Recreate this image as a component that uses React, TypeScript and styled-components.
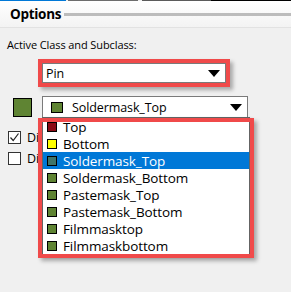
import React from "react";
import styled, { createGlobalStyle } from "styled-components";

type Layer = { name: string; color: string };

const LAYERS: Layer[] = [
	{ name: "Top", color: "#8b0a14" },
	{ name: "Bottom", color: "#ffff00" },
	{ name: "Soldermask_Top", color: "#5f8433" },
	{ name: "Soldermask_Bottom", color: "#5f8433" },
	{ name: "Pastemask_Top", color: "#5f8433" },
	{ name: "Pastemask_Bottom", color: "#5f8433" },
	{ name: "Filmmasktop", color: "#5f8433" },
	{ name: "Filmmaskbottom", color: "#5f8433" },
];

const TABS = [
	{ width: 66, color: "#0078d7" },
	{ width: 2, color: "#f0f0f0" },
	{ width: 70, color: "#6d6d6d" },
	{ width: 4, color: "#f0f0f0" },
	{ width: 69, color: "#5a5a5a" },
	{ width: 80, color: "#000000" },
];

const Arrow: React.FC = () => (
	<svg width="12" height="7" viewBox="0 0 12 7">
		<polygon points="0,0 12,0 6,7" fill="#000" />
	</svg>
);

const App: React.FC = () => {
	const selected = 2;

	return (
		<Page>
			<GlobalStyle />
			{/* tab strip at the very top */}
			<TabStrip>
				{TABS.map((t, i) => (
					<TabMark key={i} w={t.width} color={t.color} />
				))}
			</TabStrip>
			<Header>
				<Title>Options</Title>
				<Rule />
			</Header>
			<Body>
				<Label>Active Class and Subclass:</Label>
				<Highlight>
					<Combo>
						<ComboText>Pin</ComboText>
						<Arrow />
					</Combo>
				</Highlight>
				<SwatchRow>
					<BigSwatch />
					<Combo wide>
						<SmallSwatch color="#5f8433" />
						<ComboText indent>Soldermask_Top</ComboText>
						<Arrow />
					</Combo>
				</SwatchRow>
				<Checks>
					<CheckRow>
						<CheckBox>
							<svg width="11" height="11" viewBox="0 0 11 11">
								<polyline
									points="1.5,5.5 4.2,8.5 9.5,1.5"
									fill="none"
									stroke="#222"
									strokeWidth="1.2"
								/>
							</svg>
						</CheckBox>
						<CheckText>Display</CheckText>
					</CheckRow>
					<CheckRow>
						<CheckBox />
						<CheckText>Display</CheckText>
					</CheckRow>
				</Checks>
			</Body>
			{/* open dropdown list */}
			<Popup>
				{LAYERS.map((l, i) => (
					<Item key={l.name} active={i === selected}>
						<ItemSwatch color={i === selected ? "#3e7468" : l.color} />
						<span>{l.name}</span>
					</Item>
				))}
			</Popup>
			<PopupMark />
		</Page>
	);
};

const GlobalStyle = createGlobalStyle`
	html, body {
		margin: 0;
		padding: 0;
		background: #f0f0f0;
	}
	body {
		font-family: "Segoe UI", "Open Sans", "Noto Sans", sans-serif;
		color: #000;
	}
`;

const Page = styled.div`
	position: relative;
	width: 291px;
	height: 292px;
	overflow: hidden;
	background: #f0f0f0;
`;

const TabStrip = styled.div`
	display: flex;
	height: 1px;
	background: #000;
`;

const TabMark = styled.div<{ w: number; color: string }>`
	width: ${(p) => p.w}px;
	flex: none;
	background: ${(p) => p.color};
`;

const Header = styled.div`
	display: flex;
	align-items: center;
	height: 27px;
	padding: 0 0 1px 10px;
	box-sizing: border-box;
	background: linear-gradient(#ffffff, #f3f3f3);
	border-bottom: 1px solid #e2e2e2;
`;

const Title = styled.div`
	font-weight: 700;
	font-size: 13.5px;
	letter-spacing: -0.3px;
`;

const Rule = styled.div`
	flex: 1;
	height: 3px;
	margin-left: 3px;
	margin-top: 1px;
	background: #bcbcbc;
`;

const Body = styled.div`
	padding: 9px 0 0 7px;
`;

const Label = styled.div`
	font-size: 11px;
	letter-spacing: -0.1px;
	line-height: 16px;
`;

const Highlight = styled.div`
	width: 192px;
	height: 28px;
	margin: 6px 0 0 31px;
	box-sizing: border-box;
	border: 4px solid #f04a4a;
	box-shadow: 3px 3px 4px rgba(0, 0, 0, 0.3);
	display: flex;
`;

const Combo = styled.div<{ wide?: boolean }>`
	display: flex;
	align-items: center;
	box-sizing: border-box;
	width: ${(p) => (p.wide ? "206px" : "100%")};
	height: ${(p) => (p.wide ? "22px" : "100%")};
	padding: 0 5px 0 ${(p) => (p.wide ? "8px" : "3px")};
	background: #fff;
	border: 1px solid #7a7a7a;
	font-size: 12.5px;
`;

const ComboText = styled.span<{ indent?: boolean }>`
	flex: 1;
	margin-left: ${(p) => (p.indent ? "9px" : "0")};
	letter-spacing: -0.1px;
`;

const SwatchRow = styled.div`
	display: flex;
	align-items: center;
	gap: 10px;
	margin: 9px 0 0 6px;
`;

const BigSwatch = styled.div`
	width: 19px;
	height: 19px;
	box-sizing: border-box;
	border: 1px solid #000;
	background: #5f8433;
`;

const SmallSwatch = styled.div<{ color: string }>`
	width: 12px;
	height: 11px;
	box-sizing: border-box;
	border: 1px solid #000;
	background: ${(p) => p.color};
`;

const Checks = styled.div`
	display: flex;
	flex-direction: column;
	gap: 8px;
	margin: 13px 0 0 1px;
`;

const CheckRow = styled.div`
	display: flex;
	align-items: center;
	gap: 6px;
	height: 13px;
`;

const CheckBox = styled.div`
	width: 13px;
	height: 13px;
	box-sizing: border-box;
	border: 1px solid #333;
	background: #fff;
	display: flex;
	align-items: center;
	justify-content: center;
`;

const CheckText = styled.span`
	font-size: 12.5px;
`;

const Popup = styled.div`
	position: absolute;
	left: 42px;
	top: 117px;
	width: 208px;
	box-sizing: border-box;
	border: 1px solid #646464;
	background: #fff;
	box-shadow: 2px 2px 3px rgba(0, 0, 0, 0.25);
`;

const Item = styled.div<{ active: boolean }>`
	display: flex;
	align-items: center;
	gap: 6px;
	height: 17px;
	padding-left: 4px;
	font-size: 13.5px;
	letter-spacing: -0.1px;
	background: ${(p) => (p.active ? "#0078d7" : "transparent")};
	color: ${(p) => (p.active ? "#fff" : "#000")};
`;

const ItemSwatch = styled.div<{ color: string }>`
	width: 10px;
	height: 10px;
	flex: none;
	box-sizing: border-box;
	border: 1px solid #000;
	background: ${(p) => p.color};
`;

const PopupMark = styled.div`
	position: absolute;
	left: 38px;
	top: 118px;
	width: 216px;
	height: 140px;
	box-sizing: border-box;
	border: 4px solid #f04a4a;
	box-shadow: 3px 3px 4px rgba(0, 0, 0, 0.3);
	pointer-events: none;
`;

export default App;
